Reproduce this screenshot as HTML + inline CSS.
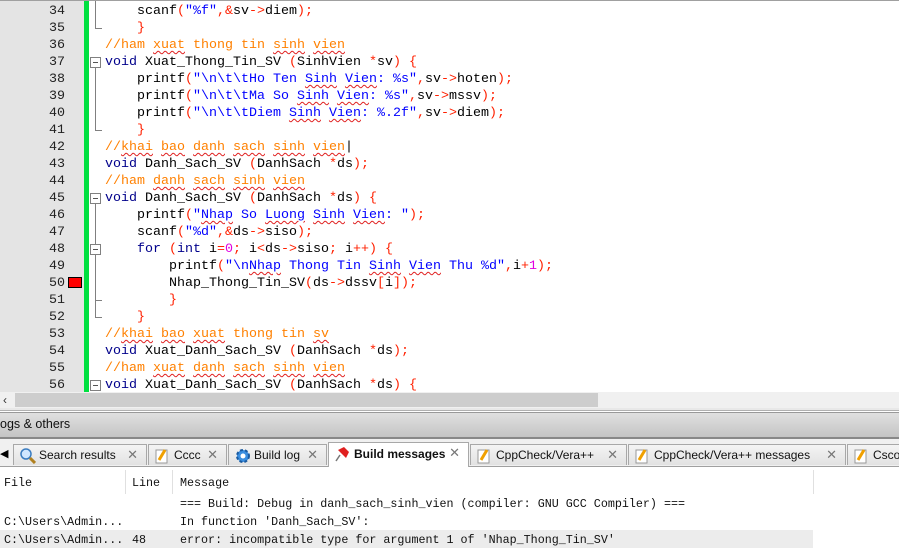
<!DOCTYPE html><html><head><style>
*{margin:0;padding:0;box-sizing:border-box}
html,body{width:899px;height:552px;overflow:hidden}
body{background:#fff;font-family:"Liberation Sans",sans-serif;position:relative}
.ed{position:absolute;left:0;top:0;width:899px;height:392px;border-top:1px solid #a0a0a0;overflow:hidden}
.gut{position:absolute;left:0;top:0;width:84px;height:392px;background:#e4e4e4}
.grn{position:absolute;left:84px;top:0;width:5px;height:392px;background:#00e040}
.fold{position:absolute;left:89px;top:0;width:14px;height:392px;background:#fff}
.ln{position:absolute;left:0;width:65px;text-align:right;font:13.33px "Liberation Mono",monospace;color:#222;height:17px;line-height:17px}
.cl{position:absolute;left:105px;font:13.33px "Liberation Mono",monospace;white-space:pre;height:17px;line-height:17px;color:#000}
.k{color:#00008b}.s{color:#0000ff}.p{color:#ff2000}.c{color:#ff8000}.n{color:#e000e0}
.w{text-decoration:underline wavy #e02020;text-decoration-thickness:1px;text-underline-offset:2px}
.fbox{position:absolute;left:90px;width:11px;height:11px;border:1px solid #808080;background:#fff}
.fbox:after{content:"";position:absolute;left:2px;top:4px;width:5px;height:1px;background:#555}
.vl{position:absolute;left:95px;width:1px;background:#808080}
.hl{position:absolute;left:95px;width:7px;height:1px;background:#808080}
#tabs{position:absolute;left:0;top:0;width:899px;height:552px;overflow:hidden}
</style></head><body>
<div class="ed">
<div class="gut"></div><div class="grn"></div><div class="fold"></div>
<div style="position:absolute;left:68px;top:276px;width:14px;height:11px;background:#f00;border:1px solid #000"></div>
<div id="c"></div>
</div>
<div style="position:absolute;left:0;top:392px;width:899px;height:16px;background:#f0f0f0"></div>
<div style="position:absolute;left:15px;top:393px;width:583px;height:14px;background:#cdcdcd"></div>
<div style="position:absolute;left:3px;top:393px;font-size:12px;color:#333">&#8249;</div>
<div style="position:absolute;left:0;top:408px;width:899px;height:3px;background:#e8e8e8;border-bottom:1px solid #b0b0b0"></div>
<div style="position:absolute;left:0;top:412px;width:899px;height:27px;background:linear-gradient(#e0e0e0,#c4c4c4);border-top:1px solid #999;border-bottom:2px solid #888;font-size:12.5px;line-height:22px;color:#111">ogs &amp; others</div>
<div style="position:absolute;left:0;top:439px;width:899px;height:28px;background:#f0f0f0;border-bottom:1px solid #a0a0a0"></div>
<div style="position:absolute;left:0;top:447px;font-size:11px">&#9664;</div>
<div id="tabs"></div>
<div style="position:absolute;left:0;top:468px;width:899px;height:84px;background:#fff"></div>
<div style="position:absolute;left:125px;top:470px;width:1px;height:24px;background:#e0e0e0"></div>
<div style="position:absolute;left:172px;top:470px;width:1px;height:24px;background:#e0e0e0"></div>
<div style="position:absolute;left:813px;top:470px;width:1px;height:24px;background:#e0e0e0"></div>
<div style="position:absolute;left:0;top:530px;width:813px;height:18px;background:#ececec"></div>
<div id="tb" style="font:11.7px 'Liberation Mono',monospace;color:#111">
<div style="position:absolute;left:4px;top:476px">File</div>
<div style="position:absolute;left:132px;top:476px">Line</div>
<div style="position:absolute;left:180px;top:476px">Message</div>
<div style="position:absolute;left:180px;top:497px">=== Build: Debug in danh_sach_sinh_vien (compiler: GNU GCC Compiler) ===</div>
<div style="position:absolute;left:4px;top:515px">C:\Users\Admin...</div>
<div style="position:absolute;left:180px;top:515px">In function 'Danh_Sach_SV':</div>
<div style="position:absolute;left:4px;top:533px">C:\Users\Admin...</div>
<div style="position:absolute;left:132px;top:533px">48</div>
<div style="position:absolute;left:180px;top:533px">error: incompatible type for argument 1 of 'Nhap_Thong_Tin_SV'</div>
</div>
<script>
var L=[
[34,'    scanf<span class="p">(</span><span class="s">"%f"</span><span class="p">,&amp;</span>sv<span class="p">-&gt;</span>diem<span class="p">);</span>'],
[35,'    <span class="p">}</span>'],
[36,'<span class="c">//ham <span class="w">xuat</span> thong tin <span class="w">sinh</span> <span class="w">vien</span></span>'],
[37,'<span class="k">void</span> Xuat_Thong_Tin_SV <span class="p">(</span>SinhVien <span class="p">*</span>sv<span class="p">)</span> <span class="p">{</span>'],
[38,'    printf<span class="p">(</span><span class="s">"\\n\\t\\tHo Ten <span class="w">Sinh</span> <span class="w">Vien</span>: %s"</span><span class="p">,</span>sv<span class="p">-&gt;</span>hoten<span class="p">);</span>'],
[39,'    printf<span class="p">(</span><span class="s">"\\n\\t\\tMa So <span class="w">Sinh</span> <span class="w">Vien</span>: %s"</span><span class="p">,</span>sv<span class="p">-&gt;</span>mssv<span class="p">);</span>'],
[40,'    printf<span class="p">(</span><span class="s">"\\n\\t\\tDiem <span class="w">Sinh</span> <span class="w">Vien</span>: %.2f"</span><span class="p">,</span>sv<span class="p">-&gt;</span>diem<span class="p">);</span>'],
[41,'    <span class="p">}</span>'],
[42,'<span class="c">//<span class="w">khai</span> <span class="w">bao</span> <span class="w">danh</span> <span class="w">sach</span> <span class="w">sinh</span> <span class="w">vien</span></span>|'],
[43,'<span class="k">void</span> Danh_Sach_SV <span class="p">(</span>DanhSach <span class="p">*</span>ds<span class="p">);</span>'],
[44,'<span class="c">//ham <span class="w">danh</span> <span class="w">sach</span> <span class="w">sinh</span> <span class="w">vien</span></span>'],
[45,'<span class="k">void</span> Danh_Sach_SV <span class="p">(</span>DanhSach <span class="p">*</span>ds<span class="p">)</span> <span class="p">{</span>'],
[46,'    printf<span class="p">(</span><span class="s">"<span class="w">Nhap</span> So <span class="w">Luong</span> <span class="w">Sinh</span> <span class="w">Vien</span>: "</span><span class="p">);</span>'],
[47,'    scanf<span class="p">(</span><span class="s">"%d"</span><span class="p">,&amp;</span>ds<span class="p">-&gt;</span>siso<span class="p">);</span>'],
[48,'    <span class="k">for</span> <span class="p">(</span><span class="k">int</span> i<span class="p">=</span><span class="n">0</span><span class="p">;</span> i<span class="p">&lt;</span>ds<span class="p">-&gt;</span>siso<span class="p">;</span> i<span class="p">++)</span> <span class="p">{</span>'],
[49,'        printf<span class="p">(</span><span class="s">"\\n<span class="w">Nhap</span> Thong Tin <span class="w">Sinh</span> <span class="w">Vien</span> Thu %d"</span><span class="p">,</span>i<span class="p">+</span><span class="n">1</span><span class="p">);</span>'],
[50,'        Nhap_Thong_Tin_SV<span class="p">(</span>ds<span class="p">-&gt;</span>dssv<span class="p">[</span>i<span class="p">]);</span>'],
[51,'        <span class="p">}</span>'],
[52,'    <span class="p">}</span>'],
[53,'<span class="c">//<span class="w">khai</span> <span class="w">bao</span> <span class="w">xuat</span> thong tin <span class="w">sv</span></span>'],
[54,'<span class="k">void</span> Xuat_Danh_Sach_SV <span class="p">(</span>DanhSach <span class="p">*</span>ds<span class="p">);</span>'],
[55,'<span class="c">//ham <span class="w">xuat</span> <span class="w">danh</span> <span class="w">sach</span> <span class="w">sinh</span> <span class="w">vien</span></span>'],
[56,'<span class="k">void</span> Xuat_Danh_Sach_SV <span class="p">(</span>DanhSach <span class="p">*</span>ds<span class="p">)</span> <span class="p">{</span>']];
var h='';
L.forEach(function(l,i){var t=2+i*17;
h+='<div class="ln" style="top:'+t+'px">'+l[0]+'</div><div class="cl" style="top:'+t+'px">'+l[1]+'</div>';});
function fb(i){return '<div class="fbox" style="top:'+(5+i*17)+'px"></div>'}
function vl(a,b){return '<div class="vl" style="top:'+a+'px;height:'+(b-a)+'px"></div>'}
function hl(y){return '<div class="hl" style="top:'+y+'px"></div>'}
h+=vl(0,27)+hl(27);
h+=fb(3)+vl(16+3*17,129)+hl(129);
h+=fb(11)+vl(16+11*17,316)+hl(316);
h+=fb(14)+vl(16+14*17,299)+hl(299);
h+=fb(22);
document.getElementById('c').innerHTML=h;
var T=[[13,147,'Search results','q'],[148,227,'Cccc','e'],[228,327,'Build log','g'],[328,469,'Build messages','r'],[470,627,'CppCheck/Vera++','e'],[628,846,'CppCheck/Vera++ messages','e'],[847,899,'Cscope','e']];
var s='';
T.forEach(function(t,i){var a=i==3;
var ic=t[3]=='q'?'<svg width="16" height="16" style="position:absolute;left:6px;top:3px"><circle cx="6" cy="6" r="5" fill="#cfe6ff" stroke="#3a7cc0" stroke-width="1.5"/><path d="M10 10l5 5" stroke="#b08020" stroke-width="3"/></svg>':
t[3]=='g'?'<svg width="16" height="16" style="position:absolute;left:6px;top:3px"><circle cx="8" cy="8" r="6" fill="#3a8ee0" stroke="#1a5aa0" stroke-width="2" stroke-dasharray="3 2"/><circle cx="8" cy="8" r="2.5" fill="#fff"/></svg>':
t[3]=='r'?'<svg width="16" height="16" style="position:absolute;left:6px;top:3px"><path d="M3 4l6-3 5 5-3 6z" fill="#e02020"/><path d="M5 9l-4 6" stroke="#777" stroke-width="1.5"/></svg>':
'<svg width="14" height="16" style="position:absolute;left:6px;top:3px"><rect x="1" y="2" width="11" height="13" fill="#fff" stroke="#999"/><path d="M4 12l6-10" stroke="#f0a000" stroke-width="3"/></svg>';
var last=i==6;
s+='<div style="position:absolute;left:'+t[0]+'px;top:'+(a?442:444)+'px;width:'+(t[1]-t[0])+'px;height:'+(a?25:21)+'px;background:'+(a?'#fff':'linear-gradient(#f4f4f4,#e2e2e2)')+';border:1px solid #a8a8a8;border-bottom:none;'+(last?'border-right:none;':'')+'font-size:12px;line-height:20px;color:#111;overflow:hidden;white-space:nowrap">'+ic+'<span style="position:absolute;left:25px;top:'+(a?1:0)+'px;'+(a?'font-weight:bold':'')+'">'+t[2]+'</span>'+(last?'':'<span style="position:absolute;right:8px;top:0;color:#777;font-size:13px">&#10005;</span>')+'</div>';});
document.getElementById('tabs').innerHTML=s;
</script>
</body></html>
